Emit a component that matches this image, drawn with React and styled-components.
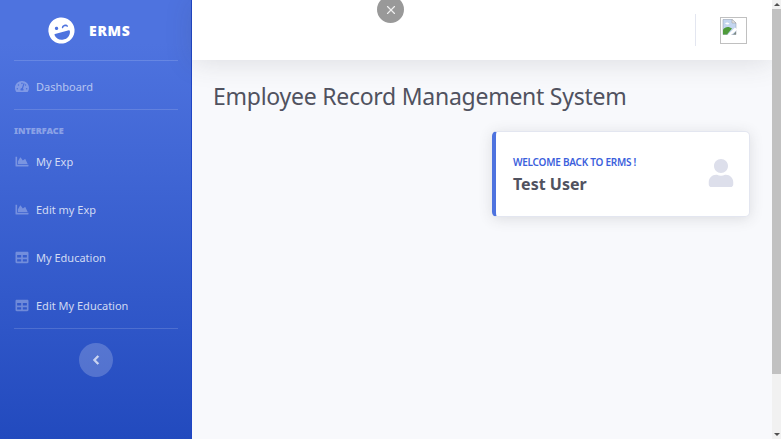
import React from "react";
import styled, { createGlobalStyle } from "styled-components";
import { X } from "lucide-react";
import {
  FaLaughWink,
  FaTachometerAlt,
  FaChartArea,
  FaTable,
  FaChevronLeft,
  FaUser,
} from "react-icons/fa";

const GlobalStyle = createGlobalStyle`
  html, body {
    margin: 0;
    padding: 0;
    height: 100%;
    overflow: hidden;
  }
  body {
    font-family: "Noto Sans", "Open Sans", "Liberation Sans", sans-serif;
    background: #f8f9fc;
  }
`;

const Wrapper = styled.div`
  display: flex;
  height: 100vh;
  overflow: hidden;
  position: relative;
`;

const Sidebar = styled.nav`
  width: 192px;
  flex: none;
  box-sizing: border-box;
  border-right: 1px solid #1f45c4;
  padding: 0 13px 0 14px;
  background: linear-gradient(180deg, #4e73df 10%, #224abe 100%);
  display: flex;
  flex-direction: column;
`;

const Brand = styled.div`
  height: 60px;
  display: flex;
  align-items: center;
  padding-left: 34px;
  gap: 14px;
  color: #fff;
  svg {
    font-size: 27px;
    transform: rotate(-15deg);
  }
`;

const BrandName = styled.span`
  font-size: 14px;
  font-weight: 900;
  letter-spacing: 0.7px;
`;

const Divider = styled.hr`
  margin: ${(p) => p.$offset || 0}px 0 0;
  border: 0;
  border-top: 1px solid rgba(255, 255, 255, 0.15);
`;

const NavItem = styled.a`
  height: 48px;
  box-sizing: border-box;
  padding-top: ${(p) => (p.$active ? 3 : 0)}px;
  display: flex;
  align-items: center;
  gap: 7px;
  font-size: 11px;
  color: ${(p) => (p.$active ? "rgba(255,255,255,0.6)" : "rgba(255,255,255,0.78)")};
  svg {
    width: 14px;
    flex: none;
    font-size: 13px;
    color: rgba(255, 255, 255, 0.3);
    margin-left: 1px;
  }
`;

const SectionLabel = styled.div`
  font-size: 9px;
  font-weight: 900;
  color: rgba(255, 255, 255, 0.4);
  text-transform: uppercase;
  margin-top: 14px;
  height: 13px;
  line-height: 13px;
`;

const ToggleButton = styled.button`
  width: 34px;
  height: 34px;
  margin: 14px auto 0;
  padding: 0;
  border: 0;
  border-radius: 50%;
  background: rgba(255, 255, 255, 0.2);
  color: rgba(255, 255, 255, 0.65);
  display: flex;
  align-items: center;
  justify-content: center;
  font-size: 10px;
  svg {
    stroke: currentColor;
    stroke-width: 40px;
  }
`;

const Content = styled.div`
  flex: 1;
  min-width: 0;
  display: flex;
  flex-direction: column;
`;

const Topbar = styled.header`
  height: 60px;
  flex: none;
  background: #fff;
  box-shadow: 0 2px 28px rgba(58, 59, 69, 0.15);
  display: flex;
  align-items: center;
  justify-content: flex-end;
  padding-right: 25px;
`;

const TopDivider = styled.div`
  width: 1px;
  height: 32px;
  background: #e3e6f0;
  margin-right: 24px;
`;

const Avatar = styled.div`
  width: 25px;
  height: 25px;
  box-sizing: content-box;
  border: 1px solid #c0c0c0;
  background: #fff;
  svg {
    display: block;
    width: 16px;
    height: 16px;
    margin: 1px 0 0 1px;
  }
`;

const CloseBubble = styled.button`
  position: absolute;
  left: 377px;
  top: -4px;
  width: 27px;
  height: 27px;
  padding: 0;
  border: 0;
  border-radius: 50%;
  background: #999;
  color: #f0f0f0;
  display: flex;
  align-items: center;
  justify-content: center;
`;

const Page = styled.main`
  padding: 18px 22px 0 21px;
  display: flex;
  flex-direction: column;
`;

const Heading = styled.h1`
  margin: 0;
  font-size: 23px;
  letter-spacing: -0.26px;
  font-weight: 400;
  line-height: 36px;
  color: #50525f;
  white-space: nowrap;
`;

const Card = styled.section`
  align-self: flex-end;
  width: 258px;
  height: 86px;
  margin-top: 17px;
  box-sizing: border-box;
  padding: 2px 14px 0 17px;
  background: #fff;
  border-radius: 5px;
  border: 1px solid #e3e6f0;
  border-left: 4px solid #4e73df;
  box-shadow: 0 2px 14px rgba(58, 59, 69, 0.15);
  display: flex;
  align-items: center;
  justify-content: space-between;
`;

const CardLabel = styled.div`
  font-size: 10px;
  letter-spacing: -0.25px;
  font-weight: 600;
  color: #3c5fdc;
  text-transform: uppercase;
  line-height: 14px;
  margin-bottom: 3px;
`;

const CardValue = styled.div`
  font-size: 16px;
  font-weight: 700;
  color: #50525f;
  line-height: 24px;
`;

const CardIcon = styled(FaUser)`
  font-size: 28px;
  margin-top: -4px;
  color: #dddfeb;
`;

const Scrollbar = styled.div`
  width: 9px;
  flex: none;
  background: #f1f1f1;
  display: flex;
  flex-direction: column;
`;

const ScrollButton = styled.div`
  height: 9px;
  flex: none;
  display: flex;
  align-items: center;
  justify-content: center;
  margin-top: ${(p) => (p.$down ? "auto" : "0")};
  &::before {
    content: "";
    border-left: 3px solid transparent;
    border-right: 3px solid transparent;
    border-${(p) => (p.$down ? "top" : "bottom")}: 3px solid #505050;
  }
`;

const ScrollThumb = styled.div`
  height: 365px;
  flex: none;
  background: #c1c1c1;
`;

const BrokenImage = () => (
  <svg viewBox="0 0 16 16">
    <path d="M1 0.5H10L14 4V15.5H1Z" fill="#c4d6f0" stroke="#9aa5b5" strokeWidth="0.6" />
    <path d="M10 0.5V4H14Z" fill="#e8e8e8" stroke="#9a9a9a" strokeWidth="0.5" />
    <path d="M3 4.5C4.5 3 6.5 3.5 7.5 5C6 5.6 4.5 5.6 3 4.5Z" fill="#fff" />
    <path d="M1 15.5V10.5C3 7.5 7 7 10 9.5L5 15.5Z" fill="#4f9b3a" />
    <path d="M5.5 16L13 8.5L15.5 10.5L9 16Z" fill="#fff" />
    <path d="M11 15.5L14 12.5V15.5Z" fill="#7f8a80" />
  </svg>
);

const items = [
  { label: "My Exp", icon: FaChartArea },
  { label: "Edit my Exp", icon: FaChartArea },
  { label: "My Education", icon: FaTable },
  { label: "Edit My Education", icon: FaTable },
];

export default function App() {
  return (
    <>
      <GlobalStyle />
      <Wrapper>
        <Sidebar>
          <Brand>
            <FaLaughWink />
            <BrandName>ERMS</BrandName>
          </Brand>
          <Divider />
          <NavItem $active>
            <FaTachometerAlt />
            Dashboard
          </NavItem>
          <Divider />
          <SectionLabel>Interface</SectionLabel>
          {items.map((item) => (
            <NavItem key={item.label}>
              <item.icon />
              {item.label}
            </NavItem>
          ))}
          <Divider $offset={-1} />
          <ToggleButton>
            <FaChevronLeft />
          </ToggleButton>
        </Sidebar>
        <Content>
          <Topbar>
            <TopDivider />
            <Avatar>
              <BrokenImage />
            </Avatar>
          </Topbar>
          <Page>
            <Heading>Employee Record Management System</Heading>
            <Card>
              <div>
                <CardLabel>Welcome back to ERMS !</CardLabel>
                <CardValue>Test User</CardValue>
              </div>
              <CardIcon />
            </Card>
          </Page>
        </Content>
        <Scrollbar>
          <ScrollButton />
          <ScrollThumb />
          <ScrollButton $down />
        </Scrollbar>
        <CloseBubble>
          <X size={14} strokeWidth={2} />
        </CloseBubble>
      </Wrapper>
    </>
  );
}
